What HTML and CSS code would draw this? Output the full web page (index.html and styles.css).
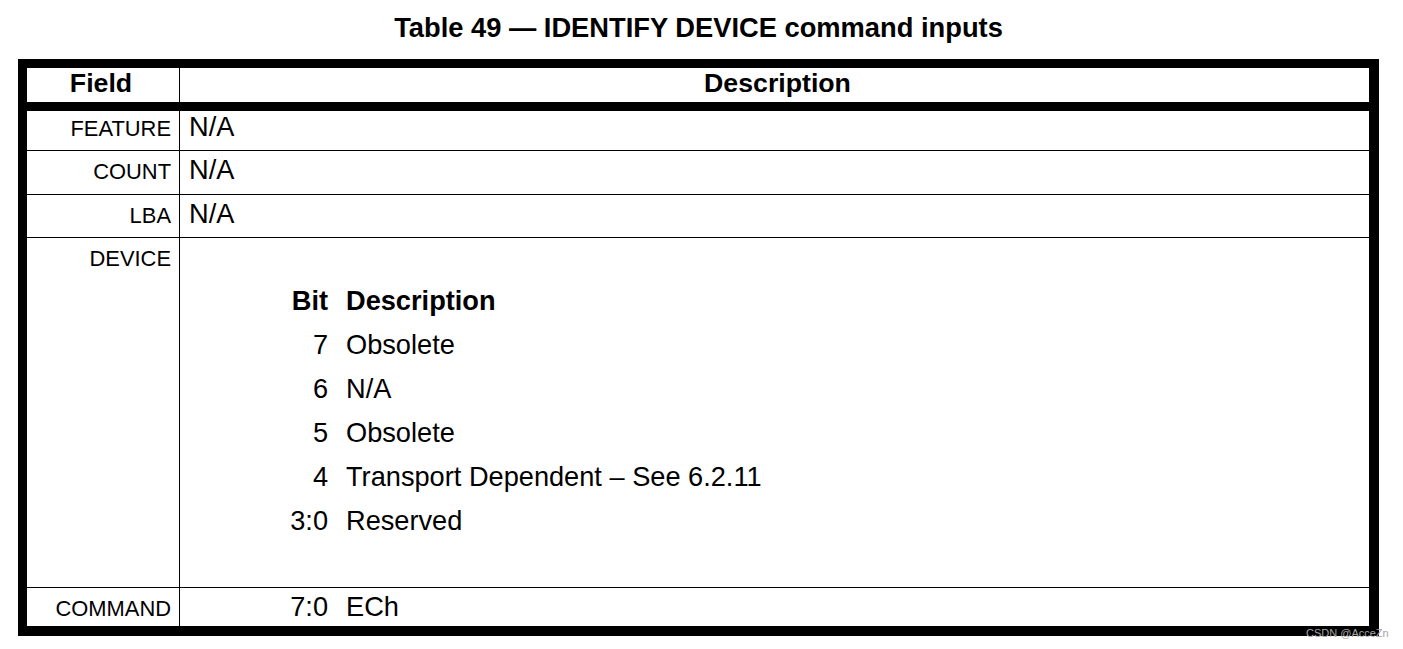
FILE: index.html
```html
<!DOCTYPE html>
<html lang="en">
<head>
<meta charset="utf-8">
<title>Table 49 — IDENTIFY DEVICE command inputs</title>
<link rel="stylesheet" href="styles.css">
</head>
<body>
<div class="page">
  <h1 class="title">Table 49 — IDENTIFY DEVICE command inputs</h1>
  <div class="table">
    <div class="row head">
      <div class="cell label">Field</div>
      <div class="cell desc">Description</div>
    </div>
    <div class="row r-feature">
      <div class="cell label">FEATURE</div>
      <div class="cell desc">N/A</div>
    </div>
    <div class="row r-count">
      <div class="cell label">COUNT</div>
      <div class="cell desc">N/A</div>
    </div>
    <div class="row r-lba">
      <div class="cell label">LBA</div>
      <div class="cell desc">N/A</div>
    </div>
    <div class="row r-device">
      <div class="cell label">DEVICE</div>
      <div class="cell desc">
        <div class="bits">
          <div class="bit th">Bit</div><div class="bdesc th">Description</div>
          <div class="bit">7</div><div class="bdesc">Obsolete</div>
          <div class="bit">6</div><div class="bdesc">N/A</div>
          <div class="bit">5</div><div class="bdesc">Obsolete</div>
          <div class="bit">4</div><div class="bdesc">Transport Dependent – See 6.2.11</div>
          <div class="bit">3:0</div><div class="bdesc">Reserved</div>
        </div>
      </div>
    </div>
    <div class="row r-command">
      <div class="cell label">COMMAND</div>
      <div class="cell desc">
        <div class="bits cmd">
          <div class="bit">7:0</div><div class="bdesc">ECh</div>
        </div>
      </div>
    </div>
  </div>
  <div class="watermark">CSDN @AcceZn</div>
</div>
</body>
</html>
```

FILE: styles.css
```css
* { box-sizing: border-box; }

html, body {
  margin: 0;
  padding: 0;
  background: #ffffff;
}

body {
  font-family: "Liberation Sans", Arial, sans-serif;
  color: #000;
}

.page {
  position: relative;
  width: 1403px;
  height: 649px;
  padding-left: 18px;
}

.title {
  margin: 0;
  padding-top: 12px;
  height: 59px;
  font-size: 27.3px;
  line-height: 32px;
  font-weight: bold;
  text-align: center;
  width: 1361px;
}

.table {
  width: 1361px;
  border-style: solid;
  border-color: #000;
  border-width: 9px 10px 10px 9px;
}

.row {
  display: flex;
  border-bottom: 1px solid #000;
}

.row.head {
  height: 43px;
  border-bottom: 9px solid #000;
}

.row.r-command { border-bottom: none; height: 38px; }
.r-feature { height: 40px; }
.r-count { height: 44px; }
.r-lba { height: 43px; }
.r-device { height: 350px; }

.cell.label {
  width: 153px;
  flex: none;
  border-right: 1px solid #000;
  text-align: right;
  padding-right: 8px;
  padding-top: 7.5px;
  font-size: 21.9px;
  line-height: 26px;
}

.cell.desc {
  flex: 1;
  padding-left: 9px;
  padding-top: 4px;
  font-size: 27.2px;
  line-height: 30px;
}

.head .cell.label,
.head .cell.desc {
  font-weight: bold;
  font-size: 26.7px;
  line-height: 30px;
  padding-top: 0;
  text-align: center;
  padding-left: 0;
  padding-right: 0;
}

.head .cell.label { padding-right: 4px; }
.head .cell.desc { padding-left: 6px; }

.r-feature .cell.label { padding-top: 4.5px; }
.r-feature .cell.desc { padding-top: 1px; }

.r-device .cell.desc { padding-top: 41px; }

.bits {
  display: grid;
  grid-template-columns: 139px auto;
  column-gap: 18px;
  justify-content: start;
  font-size: 27.2px;
  line-height: 44px;
}

.bits.cmd { line-height: 30px; }

.bit { text-align: right; }

.th { font-weight: bold; }

.watermark {
  position: absolute;
  z-index: 1;
  left: 1306px;
  top: 627px;
  font-size: 11px;
  line-height: 12px;
  color: #a6a6a6;
  font-family: "Liberation Sans", Arial, sans-serif;
}
```
